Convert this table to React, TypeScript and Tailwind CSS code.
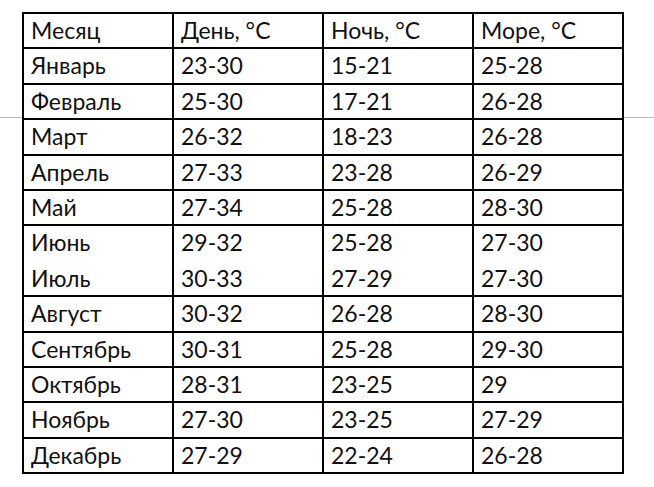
const rows: string[][][] = [
  [["Январь"], ["23-30"], ["15-21"], ["25-28"]],
  [["Февраль"], ["25-30"], ["17-21"], ["26-28"]],
  [["Март"], ["26-32"], ["18-23"], ["26-28"]],
  [["Апрель"], ["27-33"], ["23-28"], ["26-29"]],
  [["Май"], ["27-34"], ["25-28"], ["28-30"]],
  [["Июнь", "Июль"], ["29-32", "30-33"], ["25-28", "27-29"], ["27-30", "27-30"]],
  [["Август"], ["30-32"], ["26-28"], ["28-30"]],
  [["Сентябрь"], ["30-31"], ["25-28"], ["29-30"]],
  [["Октябрь"], ["28-31"], ["23-25"], ["29"]],
  [["Ноябрь"], ["27-30"], ["23-25"], ["27-29"]],
  [["Декабрь"], ["27-29"], ["22-24"], ["26-28"]],
];

const header = ["Месяц", "День, °C", "Ночь, °C", "Море, °C"];

export default function App() {
  return (
    <div
      className="relative w-[654px] h-[487px] bg-white text-[#111] pt-[12px] pl-[22px]"
      style={{ fontFamily: "Lato, 'Open Sans', sans-serif" }}
    >
      {/* page break line behind the table */}
      <div className="absolute left-0 right-0 top-[117px] h-px bg-[#b8b8b8]" />
      <div className="relative w-[602px] border-t-2 border-l-2 border-black bg-white">
        <div className="flex h-[35.4px]">
          {header.map((h) => (
            <div
              key={h}
              className="w-[150px] border-r-2 border-b-2 border-black flex items-center pl-[7px] text-[23px] leading-none"
            >
              {h}
            </div>
          ))}
        </div>
        {rows.map((row, i) => (
          <div key={i} className={`flex ${row[0].length > 1 ? "h-[70.8px]" : "h-[35.4px]"}`}>
            {row.map((cell, j) => (
              <div
                key={j}
                className="w-[150px] border-r-2 border-b-2 border-black flex flex-col justify-center pl-[7px] text-[23px] leading-[35.4px]"
              >
                {cell.map((line) => (
                  <span key={line}>{line}</span>
                ))}
              </div>
            ))}
          </div>
        ))}
      </div>
    </div>
  );
}
